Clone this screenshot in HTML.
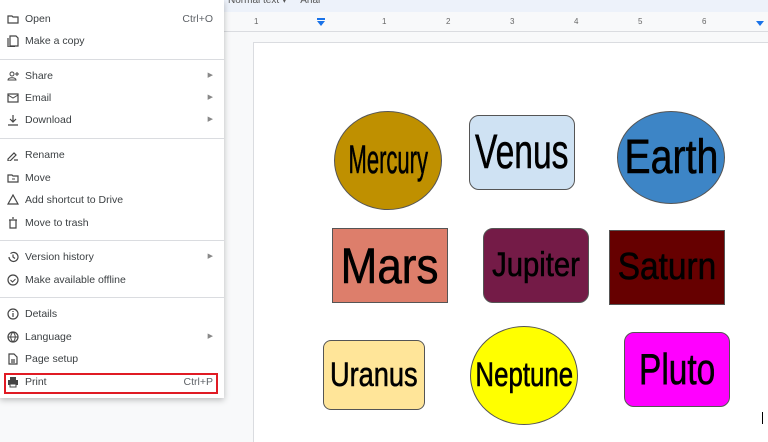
<!DOCTYPE html>
<html><head><meta charset="utf-8"><style>
*{margin:0;padding:0;box-sizing:border-box}
body{width:768px;height:432px;overflow:hidden;background:#f8f9fa;font-family:"Liberation Sans",sans-serif;position:relative}
.tb{position:absolute;left:0;top:0;width:768px;height:12px;background:#edf2fa}
.ruler{position:absolute;left:224px;top:12px;width:544px;height:20px;background:#f8f9fa;border-bottom:1px solid #dadce0}
.page{position:absolute;left:253px;top:42px;width:515px;height:400px;background:#fff;border-left:1px solid #dadce0;border-top:1px solid #dadce0}
.s{position:absolute;display:flex;align-items:center;justify-content:center;border:1px solid #555;color:#000;white-space:nowrap}
.s span{display:inline-block;-webkit-text-stroke:0.6px #000}
.menu{position:absolute;left:0;top:0;width:224px;height:398px;background:#fff;box-shadow:0 2px 6px rgba(0,0,0,.25)}
.it{position:absolute;left:0;width:224px;height:20px;font-size:10.5px;color:#3c4043;line-height:20px}
.it .t{position:absolute;left:25px}
.it .k{position:absolute;right:11px;color:#5f6368}
.it .a{position:absolute;right:11px;font-size:7px;color:#888}
.it svg{position:absolute;left:7px;top:4px}
.hr{position:absolute;left:0;width:224px;height:1px;background:#dadce0}
</style></head><body>
<div class="tb"><div style="position:absolute;left:228px;top:-5px;font-size:10px;color:#555">Normal text ▾ &nbsp;&nbsp;&nbsp; Arial</div></div>
<div class="ruler">
<svg width="544" height="20" style="position:absolute;left:0;top:0"><g fill="#666" font-size="8" font-family="Liberation Sans">
<text x="30" y="12">1</text><text x="158" y="12">1</text><text x="222" y="12">2</text><text x="286" y="12">3</text><text x="350" y="12">4</text><text x="414" y="12">5</text><text x="478" y="12">6</text></g>
<polygon points="93,9 101,9 97,14" fill="#1a73e8"/><rect x="93" y="6" width="8" height="2" fill="#1a73e8"/><polygon points="532,9 540,9 536,14" fill="#1a73e8"/></svg>
</div>
<div class="page">
<div class="s" style="left:80px;top:68px;width:108px;height:99px;border-radius:50%;background:#bf9000"><span style="font-size:40px;transform:scaleX(.55)">Mercury</span></div>
<div class="s" style="left:215px;top:72px;width:106px;height:75px;border-radius:10px;background:#cfe2f3"><span style="font-size:48px;transform:scaleX(.7)">Venus</span></div>
<div class="s" style="left:363px;top:68px;width:108px;height:93px;border-radius:50%;background:#3d85c6"><span style="font-size:48px;transform:scaleX(.82)">Earth</span></div>
<div class="s" style="left:78px;top:185px;width:116px;height:75px;background:#dd7e6b"><span style="font-size:50px;transform:scaleX(.88)">Mars</span></div>
<div class="s" style="left:229px;top:185px;width:106px;height:75px;border-radius:10px;background:#741b47"><span style="font-size:34px;transform:scaleX(.86)">Jupiter</span></div>
<div class="s" style="left:355px;top:187px;width:116px;height:75px;background:#660000"><span style="font-size:38px;transform:scaleX(.88)">Saturn</span></div>
<div class="s" style="left:69px;top:297px;width:102px;height:70px;border-radius:8px;background:#ffe599"><span style="font-size:34px;transform:scaleX(.8)">Uranus</span></div>
<div class="s" style="left:216px;top:283px;width:108px;height:99px;border-radius:50%;background:#ffff00"><span style="font-size:34px;transform:scaleX(.76)">Neptune</span></div>
<div class="s" style="left:370px;top:289px;width:106px;height:75px;border-radius:10px;background:#ff00ff"><span style="font-size:44px;transform:scaleX(.76)">Pluto</span></div>
</div>
<div style="position:absolute;left:762px;top:412px;width:1px;height:12px;background:#000"></div>
<div class="menu">
<div class="it" style="top:9px"><svg width="12" height="12"><path d="M1 3h4l1 1h5v6H1z" fill="none" stroke="#444" stroke-width="1.2"/></svg><span class="t">Open</span><span class="k">Ctrl+O</span></div>
<div class="it" style="top:31px"><svg width="12" height="12"><path d="M3 1h6l2 2v8H3zM1 3v9h7" fill="none" stroke="#444" stroke-width="1.2"/></svg><span class="t">Make a copy</span></div>
<div class="hr" style="top:59px"></div>
<div class="it" style="top:66px"><svg width="12" height="12"><circle cx="5" cy="4" r="2" fill="none" stroke="#444"/><path d="M1 10c0-3 8-3 8 0zM10 2v4M8 4h4" fill="none" stroke="#444"/></svg><span class="t">Share</span><span class="a">▶</span></div>
<div class="it" style="top:88px"><svg width="12" height="12"><rect x="1" y="2" width="10" height="8" fill="none" stroke="#444" stroke-width="1.2"/><path d="M1 3l5 3 5-3" fill="none" stroke="#444"/></svg><span class="t">Email</span><span class="a">▶</span></div>
<div class="it" style="top:110px"><svg width="12" height="12"><path d="M6 1v7M3 5l3 3 3-3M1 11h10" fill="none" stroke="#444" stroke-width="1.2"/></svg><span class="t">Download</span><span class="a">▶</span></div>
<div class="hr" style="top:138px"></div>
<div class="it" style="top:145px"><svg width="12" height="12"><path d="M1 10l6-6 2 2-6 6H1zM7 11h4" fill="none" stroke="#444" stroke-width="1.2"/></svg><span class="t">Rename</span></div>
<div class="it" style="top:168px"><svg width="12" height="12"><path d="M1 3h4l1 1h5v6H1z" fill="none" stroke="#444" stroke-width="1.2"/><path d="M5 7h3" stroke="#444"/></svg><span class="t">Move</span></div>
<div class="it" style="top:190px"><svg width="12" height="12"><path d="M6 1L1 10h10z" fill="none" stroke="#444" stroke-width="1.2"/></svg><span class="t">Add shortcut to Drive</span></div>
<div class="it" style="top:213px"><svg width="12" height="12"><path d="M2 3h8M3 3v8h6V3M5 1h2" fill="none" stroke="#444" stroke-width="1.2"/></svg><span class="t">Move to trash</span></div>
<div class="hr" style="top:240px"></div>
<div class="it" style="top:247px"><svg width="12" height="12"><path d="M2 6a4.5 4.5 0 1 0 1.5-3.4M6 3.5V6l2 1.5" fill="none" stroke="#444" stroke-width="1.2"/></svg><span class="t">Version history</span><span class="a">▶</span></div>
<div class="it" style="top:270px"><svg width="12" height="12"><circle cx="6" cy="6" r="5" fill="none" stroke="#444" stroke-width="1.2"/><path d="M3.5 6l2 2 3-3" fill="none" stroke="#444"/></svg><span class="t">Make available offline</span></div>
<div class="hr" style="top:297px"></div>
<div class="it" style="top:304px"><svg width="12" height="12"><circle cx="6" cy="6" r="5" fill="none" stroke="#444" stroke-width="1.2"/><path d="M6 5v4M6 3v1" stroke="#444" stroke-width="1.2"/></svg><span class="t">Details</span></div>
<div class="it" style="top:327px"><svg width="12" height="12"><circle cx="6" cy="6" r="5" fill="none" stroke="#444" stroke-width="1.2"/><path d="M1 6h10M6 1c-3 3-3 7 0 10M6 1c3 3 3 7 0 10" fill="none" stroke="#444"/></svg><span class="t">Language</span><span class="a">▶</span></div>
<div class="it" style="top:349px"><svg width="12" height="12"><path d="M2 1h5l3 3v7H2z M4 7h4M4 9h4" fill="none" stroke="#444" stroke-width="1.2"/></svg><span class="t">Page setup</span></div>
<div class="it" style="top:372px"><svg width="12" height="12"><rect x="1" y="4" width="10" height="5" fill="#444"/><rect x="3" y="1" width="6" height="3" fill="#444"/><rect x="3" y="8" width="6" height="3" fill="#fff" stroke="#444"/></svg><span class="t">Print</span><span class="k">Ctrl+P</span></div>
<div style="position:absolute;left:4px;top:373px;width:214px;height:21px;border:2px solid #e01b24"></div>
</div>
</body></html>
